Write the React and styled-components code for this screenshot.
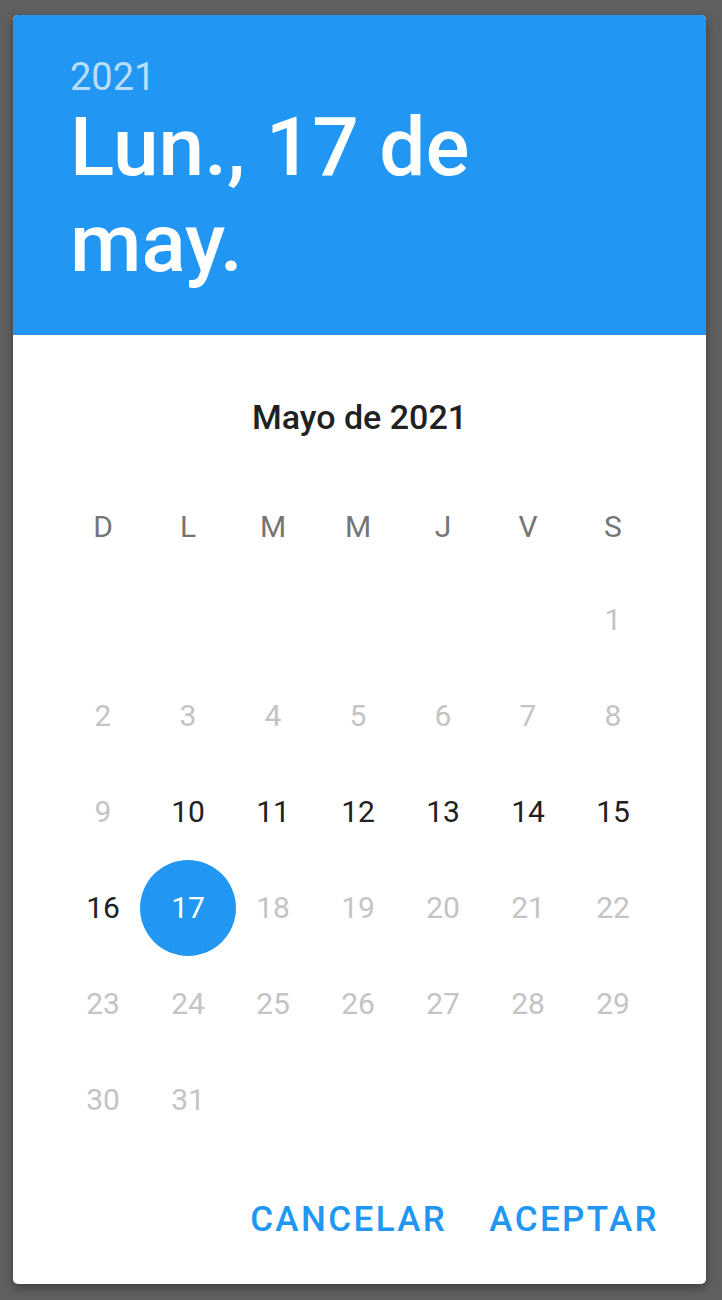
import styled, { createGlobalStyle } from "styled-components";

const GlobalStyle = createGlobalStyle`
  html, body {
    margin: 0;
    padding: 0;
    background: #606060;
    font-family: Roboto, "Noto Sans", sans-serif;
  }
`;

const Page = styled.div`
  min-height: 1300px;
  padding: 15px 16px 0 13px;
  box-sizing: border-box;
`;

const Dialog = styled.div`
  width: 693px;
  background: #ffffff;
  border-radius: 5px;
  overflow: hidden;
  box-shadow: 0 4px 10px rgba(0, 0, 0, 0.35);
`;

const Header = styled.div`
  background: #2196f3;
  padding: 40px 140px 44px 57px;
  color: #ffffff;
`;

const Year = styled.div`
  font-size: 38px;
  line-height: 44px;
  color: rgba(255, 255, 255, 0.7);
`;

const Title = styled.div`
  font-size: 82px;
  line-height: 96px;
  font-weight: 500;
`;

const Body = styled.div`
  padding-top: 62px;
  display: flex;
  flex-direction: column;
  align-items: center;
`;

const MonthLabel = styled.div`
  font-size: 34px;
  line-height: 40px;
  font-weight: 500;
  color: #212121;
  margin-bottom: 45px;
`;

const Grid = styled.div`
  display: grid;
  grid-template-columns: repeat(7, 85px);
  grid-template-rows: 90px;
  grid-auto-rows: 96px;
  margin-right: 3px;
`;

const WeekDay = styled.div`
  font-size: 30px;
  line-height: 90px;
  text-align: center;
  color: #757575;
`;

const DayCell = styled.div`
  display: flex;
  align-items: center;
  justify-content: center;
`;

const Day = styled.span`
  width: 96px;
  height: 96px;
  border-radius: 50%;
  font-size: 30px;
  line-height: 96px;
  text-align: center;
  flex-shrink: 0;
  color: ${(p) => (p.$selected ? "#ffffff" : p.$muted ? "#c4c4c4" : "#212121")};
  background: ${(p) => (p.$selected ? "#2196f3" : "transparent")};
`;

const Actions = styled.div`
  display: flex;
  justify-content: flex-end;
  gap: 42px;
  padding: 48px 47px 40px 0;
`;

const TextButton = styled.button`
  border: none;
  background: none;
  padding: 0;
  font-family: inherit;
  font-size: 35px;
  line-height: 48px;
  font-weight: 500;
  letter-spacing: 2.4px;
  color: #2196f3;
`;

const weekDays = ["D", "L", "M", "M", "J", "V", "S"];
const selected = 17;
const enabled = (d) => d >= 10 && d <= 17;

const cells = [...Array(6).fill(null), ...Array.from({ length: 31 }, (_, i) => i + 1)];

export default function App() {
  return (
    <>
      <GlobalStyle />
      <Page>
        <Dialog>
          <Header>
            <Year>2021</Year>
            <Title>Lun., 17 de may.</Title>
          </Header>
          <Body>
            <MonthLabel>Mayo de 2021</MonthLabel>
            <Grid>
              {weekDays.map((d, i) => (
                <WeekDay key={i}>{d}</WeekDay>
              ))}
              {cells.map((d, i) => (
                <DayCell key={i}>
                  {d && (
                    <Day $selected={d === selected} $muted={!enabled(d)}>
                      {d}
                    </Day>
                  )}
                </DayCell>
              ))}
            </Grid>
          </Body>
          <Actions>
            <TextButton>CANCELAR</TextButton>
            <TextButton>ACEPTAR</TextButton>
          </Actions>
        </Dialog>
      </Page>
    </>
  );
}
